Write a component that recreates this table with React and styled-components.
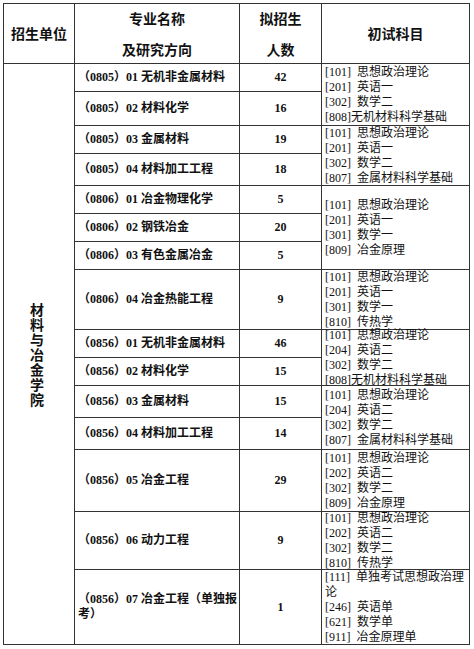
import React from 'react'
import styled, { createGlobalStyle } from 'styled-components'

const GlobalStyle = createGlobalStyle`
  html, body {
    margin: 0;
    padding: 0;
    background: #fff;
  }
  body {
    padding: 3px;
    font-family: "Liberation Serif", "Noto Sans CJK SC", serif;
    color: #111;
  }
`

const Table = styled.div`
  display: grid;
  width: 467px;
  box-sizing: border-box;
  grid-template-columns: 71px 165px 82px 148px;
  grid-template-rows: 60px 28px 34px 28px 32px 28px 28px 28px 60px 28px 28px 32px 32px 62px 58px 75px;
  border-top: 1px solid #333;
  border-left: 1px solid #333;
`

const Cell = styled.div`
  box-sizing: border-box;
  border-right: 1px solid #333;
  border-bottom: 1px solid #333;
  display: flex;
  align-items: center;
  grid-column: ${p => p.$col};
  grid-row: ${p => p.$row} / span ${p => p.$span || 1};
`

const HeadCell = styled(Cell)`
  justify-content: center;
  text-align: center;
  font-family: "Noto Sans CJK SC", sans-serif;
  font-size: 14px;
  font-weight: 700;
  line-height: 31px;
`

const UnitCell = styled(Cell)`
  justify-content: center;
`

const UnitName = styled.div`
  width: 15px;
  font-family: "Noto Sans CJK SC", serif;
  font-size: 14px;
  font-weight: 700;
  line-height: 15px;
  text-align: center;
  word-break: break-all;
  margin-right: 4px;
`

const ProgramCell = styled(Cell)`
  padding: 0 0 0 3px;
  font-size: 12px;
  font-weight: 700;
  line-height: 15px;
  white-space: pre-line;
`

const CountCell = styled(Cell)`
  justify-content: center;
  font-size: 12px;
  font-weight: 700;
`

const SubjectCell = styled(Cell)`
  padding: 0 0 0 3px;
  font-size: 12px;
  line-height: 15px;
`

const SubjectList = styled.div`
  display: flex;
  flex-direction: column;
`

const SubjectCode = styled.span`
  margin-right: ${p => (p.$gap ? '6px' : '0')};
`

const groups = [
  {
    subjects: ['[101] 思想政治理论', '[201] 英语一', '[302] 数学二', '[808]无机材料科学基础'],
    programs: [['0805', '01 无机非金属材料', 42], ['0805', '02 材料化学', 16]],
  },
  {
    subjects: ['[101] 思想政治理论', '[201] 英语一', '[302] 数学二', '[807] 金属材料科学基础'],
    programs: [['0805', '03 金属材料', 19], ['0805', '04 材料加工工程', 18]],
  },
  {
    subjects: ['[101] 思想政治理论', '[201] 英语一', '[301] 数学一', '[809] 冶金原理'],
    programs: [['0806', '01 冶金物理化学', 5], ['0806', '02 钢铁冶金', 20], ['0806', '03 有色金属冶金', 5]],
  },
  {
    subjects: ['[101] 思想政治理论', '[201] 英语一', '[301] 数学一', '[810] 传热学'],
    programs: [['0806', '04 冶金热能工程', 9]],
  },
  {
    subjects: ['[101] 思想政治理论', '[204] 英语二', '[302] 数学二', '[808]无机材料科学基础'],
    programs: [['0856', '01 无机非金属材料', 46], ['0856', '02 材料化学', 15]],
  },
  {
    subjects: ['[101] 思想政治理论', '[204] 英语二', '[302] 数学二', '[807] 金属材料科学基础'],
    programs: [['0856', '03 金属材料', 15], ['0856', '04 材料加工工程', 14]],
  },
  {
    subjects: ['[101] 思想政治理论', '[202] 英语二', '[302] 数学二', '[809] 冶金原理'],
    programs: [['0856', '05 冶金工程', 29]],
  },
  {
    subjects: ['[101] 思想政治理论', '[202] 英语二', '[302] 数学二', '[810] 传热学'],
    programs: [['0856', '06 动力工程', 9]],
  },
  {
    subjects: ['[111] 单独考试思想政治理论', '[246] 英语单', '[621] 数学单', '[911] 冶金原理单'],
    programs: [['0856', '07 冶金工程（单独报\n考）', 1]],
  },
]

function Subject({ text }) {
  const [, code, space, name] = text.match(/^(\[\d+\])( ?)(.*)$/)
  return (
    <span>
      <SubjectCode $gap={!!space}>{code}</SubjectCode>
      {name}
    </span>
  )
}

export default function App() {
  let row = 2
  const body = []

  groups.forEach((g, gi) => {
    const start = row
    g.programs.forEach(([code, name, count]) => {
      body.push(
        <ProgramCell key={`p${row}`} $col={2} $row={row}>
          {`（${code}）${name}`}
        </ProgramCell>,
        <CountCell key={`c${row}`} $col={3} $row={row}>{count}</CountCell>
      )
      row++
    })
    body.push(
      <SubjectCell key={`s${gi}`} $col={4} $row={start} $span={g.programs.length}>
        <SubjectList>
          {g.subjects.map(s => <Subject key={s} text={s} />)}
        </SubjectList>
      </SubjectCell>
    )
  })

  return (
    <>
      <GlobalStyle />
      <Table>
        <HeadCell $col={1} $row={1}>招生单位</HeadCell>
        <HeadCell $col={2} $row={1}>专业名称<br />及研究方向</HeadCell>
        <HeadCell $col={3} $row={1}>拟招生<br />人数</HeadCell>
        <HeadCell $col={4} $row={1}>初试科目</HeadCell>
        <UnitCell $col={1} $row={2} $span={row - 2}>
          <UnitName>材料与冶金学院</UnitName>
        </UnitCell>
        {body}
      </Table>
    </>
  )
}
